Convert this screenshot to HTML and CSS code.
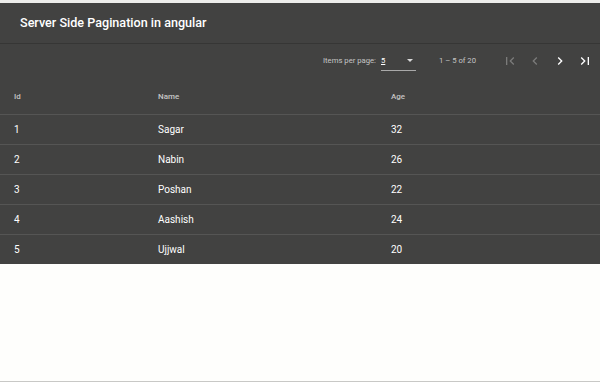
FILE: index.html
```
<!DOCTYPE html>
<html lang="en">
<head>
    <meta charset="UTF-8">
    <meta name="viewport" content="width=device-width, initial-scale=1.0">
    <title>Server Side Pagination in angular</title>
    <link rel="stylesheet" href="styles.css">
</head>
<body>
<div class="app">
    <div class="toolbar">Server Side Pagination in angular</div>

    <div class="card">
        <div class="paginator">
            <span class="page-size-label">Items per page:</span>
            <div class="page-size">
                <span class="page-size-value">5</span>
                <span class="page-size-arrow"></span>
            </div>
            <span class="range-label">1 – 5 of 20</span>
            <button class="page-btn disabled" type="button">
                <svg viewBox="0 0 24 24"><path d="M18.41 16.59L13.82 12l4.59-4.59L17 6l-6 6 6 6zM6 6h2v12H6z"/></svg>
            </button>
            <button class="page-btn disabled" type="button">
                <svg viewBox="0 0 24 24"><path d="M15.41 7.41L14 6l-6 6 6 6 1.41-1.41L10.83 12z"/></svg>
            </button>
            <button class="page-btn" type="button">
                <svg viewBox="0 0 24 24"><path d="M10 6L8.59 7.41 13.17 12l-4.58 4.59L10 18l6-6z"/></svg>
            </button>
            <button class="page-btn" type="button">
                <svg viewBox="0 0 24 24"><path d="M5.59 7.41L10.18 12l-4.59 4.59L7 18l6-6-6-6zM16 6h2v12h-2z"/></svg>
            </button>
        </div>

        <table class="data-table">
            <colgroup>
                <col class="col-id">
                <col class="col-name">
                <col>
            </colgroup>
            <thead>
                <tr><th>Id</th><th>Name</th><th>Age</th></tr>
            </thead>
            <tbody>
                <tr><td>1</td><td>Sagar</td><td>32</td></tr>
                <tr><td>2</td><td>Nabin</td><td>26</td></tr>
                <tr><td>3</td><td>Poshan</td><td>22</td></tr>
                <tr><td>4</td><td>Aashish</td><td>24</td></tr>
                <tr><td>5</td><td>Ujjwal</td><td>20</td></tr>
            </tbody>
        </table>
    </div>
</div>
</body>
</html>
```

FILE: styles.css
```
* {
    box-sizing: border-box;
}

body {
    margin: 0;
    padding: 0;
    font-family: Roboto, "Noto Sans", sans-serif;
    background: #fefefc;
}

.app {
    min-height: 100vh;
    padding-top: 3px;
    background: #ededeb;
    border-bottom: 1px solid #c8c8c6;
    display: flex;
    flex-direction: column;
}

.toolbar {
    height: 41px;
    padding: 0 20px 2px;
    display: flex;
    align-items: center;
    background: #424241;
    border-bottom: 1px solid #363635;
    color: #fff;
    font-size: 12.6px;
    font-weight: 500;
}

.card {
    background: #424241;
    color: #fff;
}

.app::after {
    content: "";
    flex: 1;
    background: #fefefc;
}

/* paginator */
.paginator {
    height: 35px;
    padding: 0 3px 2px 0;
    display: flex;
    justify-content: flex-end;
    align-items: center;
    font-size: 7.7px;
    color: rgba(255, 255, 255, 0.7);
}

.page-size-label {
    margin-right: 5px;
}

.page-size {
    width: 35px;
    height: 16px;
    margin-top: 4px;
    display: flex;
    align-items: center;
    justify-content: space-between;
    border-bottom: 1px solid rgba(255, 255, 255, 0.55);
    color: #fff;
    padding-right: 3px;
}

.page-size-value {
    text-decoration: underline;
    margin-top: -3px;
}

.page-size-arrow {
    width: 0;
    height: 0;
    margin-top: -3px;
    border-left: 3px solid transparent;
    border-right: 3px solid transparent;
    border-top: 3px solid rgba(255, 255, 255, 0.8);
}

.range-label {
    margin: 0 21px 0 23px;
}

.page-btn {
    width: 25px;
    height: 25px;
    padding: 0;
    border: none;
    background: none;
    display: flex;
    align-items: center;
    justify-content: center;
}

.page-btn svg {
    width: 16px;
    height: 16px;
    fill: #fff;
}

.page-btn.disabled svg {
    fill: rgba(255, 255, 255, 0.3);
}

/* table */
.data-table {
    width: 100%;
    border-collapse: collapse;
    table-layout: fixed;
}

.col-id {
    width: 158px;
}

.col-name {
    width: 233px;
}

.data-table th,
.data-table td {
    padding: 0;
    text-align: left;
    border-bottom: 1px solid rgba(255, 255, 255, 0.1);
}

.data-table th:first-child,
.data-table td:first-child {
    padding-left: 14px;
}

.data-table th {
    height: 35px;
    font-size: 8px;
    font-weight: 500;
    color: rgba(255, 255, 255, 0.7);
}

.data-table td {
    height: 30px;
    font-size: 10px;
    color: #fff;
}

.data-table tr:last-child td {
    border-bottom: none;
}
```
